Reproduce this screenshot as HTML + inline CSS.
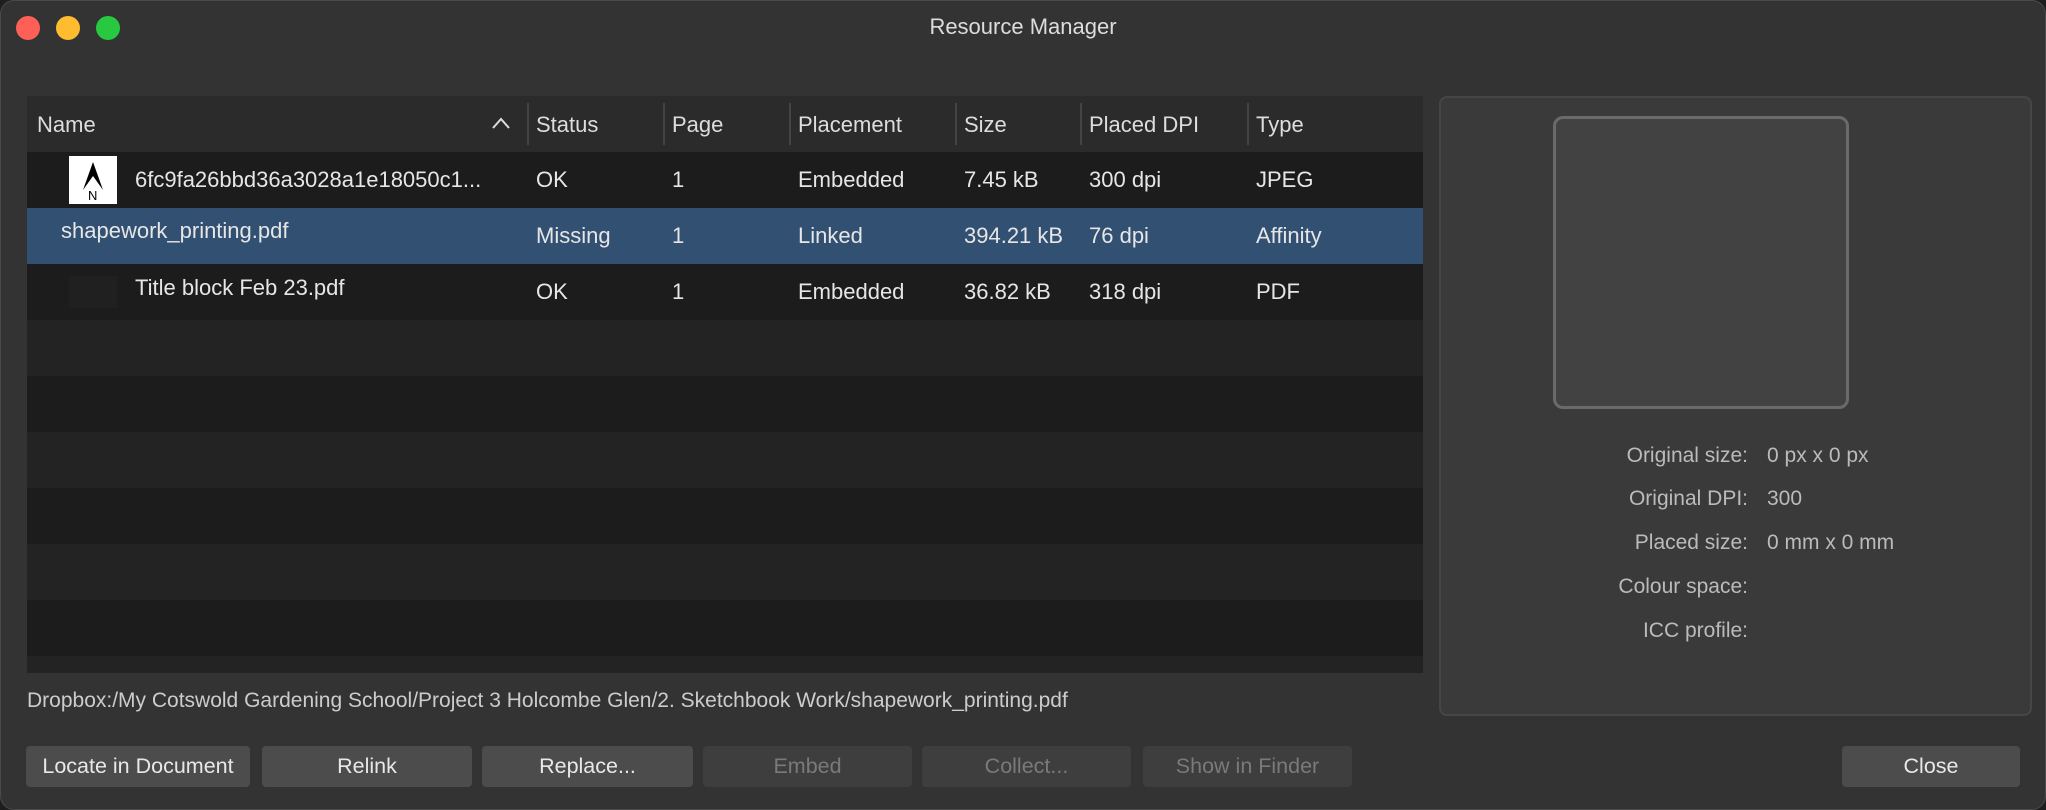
<!DOCTYPE html><html><head><style>
*{margin:0;padding:0;box-sizing:border-box}
body{width:2046px;height:810px;background:#1e1e1e;font-family:"Liberation Sans",sans-serif;overflow:hidden}
.win{position:absolute;left:0;top:0;width:2046px;height:810px;background:#333;border-radius:14px;border:1px solid #4a4a4a}
.dot{position:absolute;top:15px;width:24px;height:24px;border-radius:50%}
.title{position:absolute;top:13px;left:0;width:100%;text-align:center;color:#ddd;font-size:22px}
.table{position:absolute;left:26px;top:95px;width:1396px;height:577px;background:#1c1c1c;overflow:hidden}
.hdr{position:absolute;left:0;top:0;width:100%;height:56px;background:#2b2b2b}
.hdr span{position:absolute;top:16px;color:#ddd;font-size:22px}
.sep{position:absolute;top:7px;width:2px;height:42px;background:#444}
.row{position:absolute;left:0;width:100%;height:56px}
.row span{position:absolute;top:15px;color:#e6e6e6;font-size:22px;white-space:nowrap}
.btn{position:absolute;top:745px;height:41px;border-radius:4px;background:#4c4c4c;color:#e8e8e8;font-size:21.5px;text-align:center;line-height:41px}
.btn.d{background:#3e3e3e;color:#7a7a7a}
.panel{position:absolute;left:1438px;top:95px;width:593px;height:620px;background:#3a3a3a;border:2px solid #464646;border-radius:8px}
.lab{position:absolute;color:#bbb;font-size:21px;white-space:nowrap}
</style></head><body><div class="win">
<div class="dot" style="left:15px;background:#fe5f57"></div>
<div class="dot" style="left:55px;background:#febc2e"></div>
<div class="dot" style="left:95px;background:#28c840"></div>
<div class="title">Resource Manager</div>
<div class="table">
<div class="hdr">
<span style="left:10px">Name</span>
<svg style="position:absolute;left:464px;top:20px" width="20" height="14"><path d="M2 12 L10 3 L18 12" stroke="#ddd" stroke-width="2" fill="none"/></svg>
<div class="sep" style="left:500px"></div><span style="left:509px">Status</span>
<div class="sep" style="left:636px"></div><span style="left:645px">Page</span>
<div class="sep" style="left:762px"></div><span style="left:771px">Placement</span>
<div class="sep" style="left:928px"></div><span style="left:937px">Size</span>
<div class="sep" style="left:1053px"></div><span style="left:1062px">Placed DPI</span>
<div class="sep" style="left:1220px"></div><span style="left:1229px">Type</span>
</div>
<div class="row" style="top:56px;background:#1c1c1c">
<div style="position:absolute;left:42px;top:4px;width:48px;height:48px;background:#fff"><svg width="48" height="48"><path d="M24 6 L14 34 L24 20 L34 34 Z" fill="#000"/><text x="19" y="44" font-size="13" font-family="Liberation Sans">N</text></svg></div>
<span style="left:108px">6fc9fa26bbd36a3028a1e18050c1...</span><span style="left:509px">OK</span><span style="left:645px">1</span><span style="left:771px">Embedded</span><span style="left:937px">7.45 kB</span><span style="left:1062px">300 dpi</span><span style="left:1229px">JPEG</span></div>
<div class="row" style="top:112px;background:#325071">
<span style="left:34px;top:10px">shapework_printing.pdf</span><span style="left:509px">Missing</span><span style="left:645px">1</span><span style="left:771px">Linked</span><span style="left:937px">394.21 kB</span><span style="left:1062px">76 dpi</span><span style="left:1229px">Affinity</span></div>
<div class="row" style="top:168px;background:#1c1c1c">
<div style="position:absolute;left:42px;top:12px;width:48px;height:32px;background:#202020"></div>
<span style="left:108px;top:11px">Title block Feb 23.pdf</span><span style="left:509px">OK</span><span style="left:645px">1</span><span style="left:771px">Embedded</span><span style="left:937px">36.82 kB</span><span style="left:1062px">318 dpi</span><span style="left:1229px">PDF</span></div>
<div class="row" style="top:224px;background:#232323"></div>
<div class="row" style="top:280px;background:#1c1c1c"></div>
<div class="row" style="top:336px;background:#232323"></div>
<div class="row" style="top:392px;background:#1c1c1c"></div>
<div class="row" style="top:448px;background:#232323"></div>
<div class="row" style="top:504px;background:#1c1c1c"></div>
<div class="row" style="top:560px;background:#232323"></div>
</div>
<div class="lab" style="left:26px;top:688px;color:#ccc">Dropbox:/My Cotswold Gardening School/Project 3 Holcombe Glen/2. Sketchbook Work/shapework_printing.pdf</div>
<div class="panel"><div style="position:absolute;left:112px;top:18px;width:296px;height:293px;background:#424242;border:3px solid #6a6a6a;border-radius:10px"></div></div>
<div class="lab" style="right:297px;top:443px">Original size:</div><div class="lab" style="left:1766px;top:443px">0 px x 0 px</div>
<div class="lab" style="right:297px;top:486px">Original DPI:</div><div class="lab" style="left:1766px;top:486px">300</div>
<div class="lab" style="right:297px;top:530px">Placed size:</div><div class="lab" style="left:1766px;top:530px">0 mm x 0 mm</div>
<div class="lab" style="right:297px;top:574px">Colour space:</div>
<div class="lab" style="right:297px;top:618px">ICC profile:</div>
<div class="btn" style="left:25px;width:224px">Locate in Document</div>
<div class="btn" style="left:261px;width:210px">Relink</div>
<div class="btn" style="left:481px;width:211px">Replace...</div>
<div class="btn d" style="left:702px;width:209px">Embed</div>
<div class="btn d" style="left:921px;width:209px">Collect...</div>
<div class="btn d" style="left:1142px;width:209px">Show in Finder</div>
<div class="btn" style="left:1841px;width:178px">Close</div>
</div></body></html>
